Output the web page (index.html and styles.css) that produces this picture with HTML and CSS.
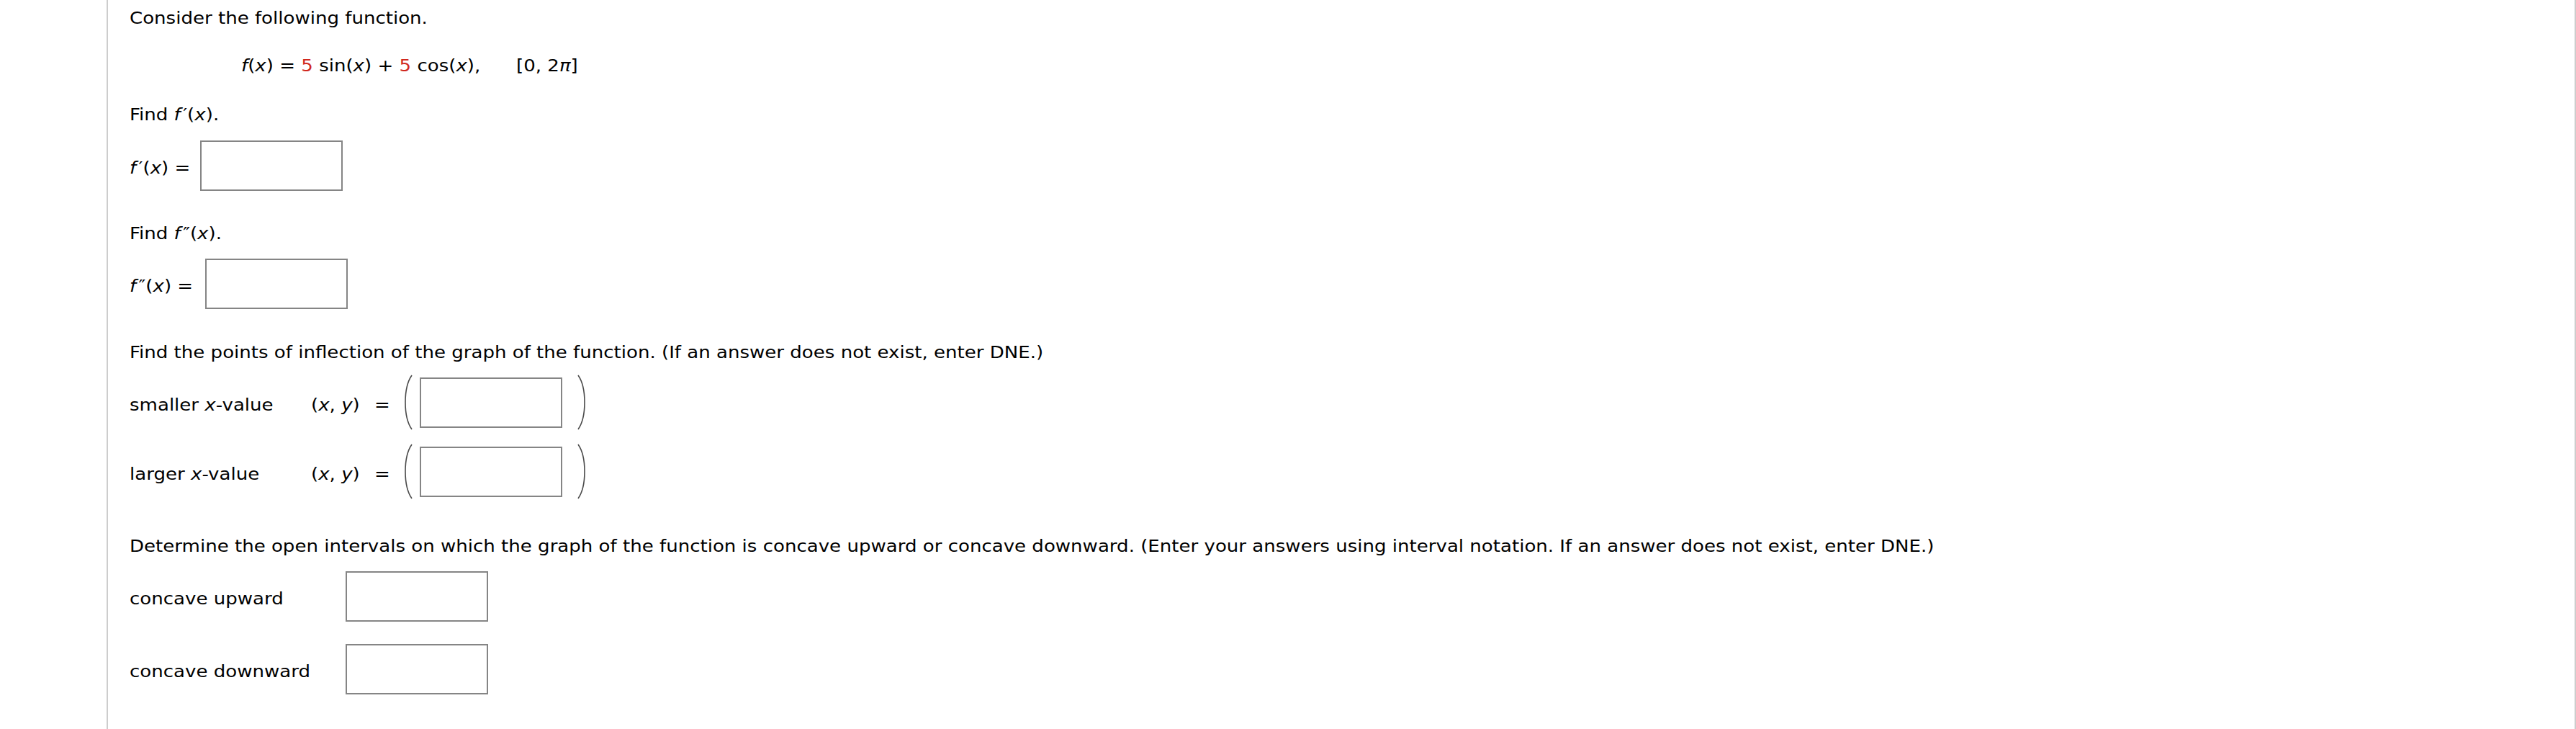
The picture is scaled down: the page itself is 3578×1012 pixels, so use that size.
FILE: index.html
```html
<!DOCTYPE html>
<html>
<head>
<meta charset="utf-8">
<link rel="stylesheet" href="styles.css">
</head>
<body>
<div class="page">
  <div class="content">
    <p class="para intro"><span class="t">Consider the following function.</span></p>
    <p class="para formula"><span class="t"><i>f</i>(<i>x</i>) = <span class="num">5</span> sin(<i>x</i>) + <span class="num">5</span> cos(<i>x</i>),<span class="interval">[0, 2<i>π</i>]</span></span></p>
    <p class="para find1"><span class="t">Find <i>f</i><span class="prime">′</span>(<i>x</i>).</span></p>
    <div class="row row1">
      <span class="label t lab-fp"><i>f</i><span class="prime">′</span>(<i>x</i>) =</span>
      <span class="box"></span>
    </div>
    <p class="para find2"><span class="t">Find <i>f</i><span class="prime">″</span>(<i>x</i>).</span></p>
    <div class="row row2">
      <span class="label t lab-fpp"><i>f</i><span class="prime">″</span>(<i>x</i>) =</span>
      <span class="box"></span>
    </div>
    <p class="para find3"><span class="t">Find the points of inflection of the graph of the function. (If an answer does not exist, enter DNE.)</span></p>
    <div class="row row3">
      <span class="label t lab-pt">smaller <i>x</i>-value</span>
      <span class="label t lab-xy">(<i>x</i>, <i>y</i>)</span>
      <span class="label t lab-eq">=</span>
      <span class="pair">
        <svg class="paren" width="17" height="77" viewBox="0 0 17 77"><path d="M15 1 C 3 18, 3 59, 15 76" fill="none" stroke="#4a4a4a" stroke-width="1.6"/></svg>
        <span class="box"></span>
        <svg class="paren paren-r" width="17" height="77" viewBox="0 0 17 77"><path d="M2 1 C 14 18, 14 59, 2 76" fill="none" stroke="#4a4a4a" stroke-width="1.6"/></svg>
      </span>
    </div>
    <div class="row row4">
      <span class="label t lab-pt">larger <i>x</i>-value</span>
      <span class="label t lab-xy">(<i>x</i>, <i>y</i>)</span>
      <span class="label t lab-eq">=</span>
      <span class="pair">
        <svg class="paren" width="17" height="77" viewBox="0 0 17 77"><path d="M15 1 C 3 18, 3 59, 15 76" fill="none" stroke="#4a4a4a" stroke-width="1.6"/></svg>
        <span class="box"></span>
        <svg class="paren paren-r" width="17" height="77" viewBox="0 0 17 77"><path d="M2 1 C 14 18, 14 59, 2 76" fill="none" stroke="#4a4a4a" stroke-width="1.6"/></svg>
      </span>
    </div>
    <p class="para find4"><span class="t">Determine the open intervals on which the graph of the function is concave upward or concave downward. (Enter your answers using interval notation. If an answer does not exist, enter DNE.)</span></p>
    <div class="row row5">
      <span class="label t lab-cc">concave upward</span>
      <span class="box"></span>
    </div>
    <div class="row row6">
      <span class="label t lab-cc">concave downward</span>
      <span class="box"></span>
    </div>
  </div>
</div>
</body>
</html>
```
FILE: styles.css
```css
html, body {
  margin: 0;
  padding: 0;
  background: #ffffff;
}
body {
  font-family: "DejaVu Sans", Verdana, sans-serif;
  font-size: 23px;
  color: #000000;
}
.page {
  margin-left: 148px;
  min-height: 1012px;
  border-left: 2px solid #cdcdcd;
  border-right: 2px solid #cdcdcd;
  box-sizing: border-box;
}
.content {
  padding: 13px 0 0 30px;
}
.t {
  display: inline-block;
  transform: scaleX(1.132);
  transform-origin: 0 0;
  white-space: nowrap;
}
.para {
  margin: 0;
  line-height: 24px;
  height: 24px;
  white-space: nowrap;
}
.prime { margin-left: 3px; }
.num { color: #d0281e; }
.interval { margin-left: 44px; }
.formula { margin-top: 42px; padding-left: 155px; }
.find1 { margin-top: 44px; }
.find2 { margin-top: 47px; }
.find3 { margin-top: 48px; }
.find4 { margin-top: 56px; }
.row {
  display: flex;
  align-items: flex-start;
}
.row1 { margin-top: 24px; }
.row2 { margin-top: 23px; }
.row3 { margin-top: 23px; }
.row4 { margin-top: 26px; }
.row5 { margin-top: 23px; }
.row6 { margin-top: 31px; }
.label {
  padding-top: 26px;
  line-height: 24px;
  white-space: nowrap;
  flex: none;
}
.lab-fp { width: 98px; }
.lab-fpp { width: 105px; }
.lab-pt { width: 252px; }
.lab-xy { width: 88px; }
.lab-eq { width: 37px; }
.lab-cc { width: 300px; }
.box {
  display: block;
  flex: none;
  width: 198px;
  height: 70px;
  box-sizing: border-box;
  border: 2px solid #858585;
  background: #ffffff;
}
.pair {
  display: flex;
  align-items: center;
  height: 70px;
}
.paren {
  display: block;
  flex: none;
  margin: -4px 9px -3px 0;
}
.paren-r { margin: -4px 0 -3px 20px; }
```
